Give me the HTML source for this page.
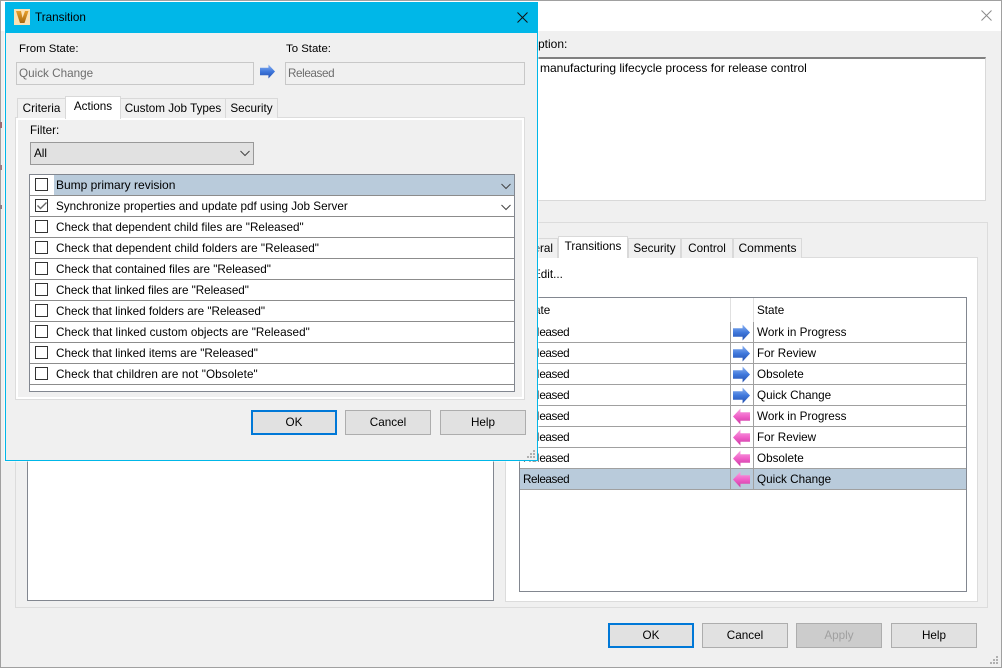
<!DOCTYPE html>
<html><head><meta charset="utf-8"><style>
html,body{margin:0;padding:0;width:1002px;height:668px;overflow:hidden;background:#f0f0f0}
*{box-sizing:border-box}
body{font:11.7px/16px "Liberation Sans",sans-serif;color:#000;position:relative}
.a{position:absolute}
.t{position:absolute;white-space:nowrap;line-height:16px;margin-top:1px}
.rel{letter-spacing:-.4px}
.btn{position:absolute;width:86px;height:25px;background:#e1e1e1;border:1px solid #adadad;text-align:center;line-height:23px}
.btn.d{border:2px solid #0078d7;line-height:21px}
.tab{position:absolute;background:#f0f0f0;border:1px solid #d9d9d9;border-bottom:none;text-align:center;white-space:nowrap}
.tab.on{background:#fff;z-index:2}
.row{position:absolute;left:1px;width:484px;height:21px;border-bottom:1px solid #8c8c8c;background:#fff}
.row span{position:absolute;left:26px;top:3px;white-space:nowrap}
.cb{position:absolute;left:5px;top:3px;width:13px;height:13px;border:1px solid #333;background:#fff}
.mrow{position:absolute;left:1px;width:446px;height:21px;border-bottom:1px solid #a0a0a0;background:#fff}
.mrow .l{position:absolute;left:3px;top:3px;white-space:nowrap;letter-spacing:-.4px}
.mrow .r{position:absolute;left:237px;top:3px;white-space:nowrap}
.mrow .sep{position:absolute;left:210px;top:0;width:1px;height:21px;background:#a0a0a0}
.mrow .sep2{position:absolute;left:233px;top:0;width:1px;height:21px;background:#a0a0a0}
.mrow svg{position:absolute;left:213px;top:2px}
</style></head><body>
<svg width="0" height="0" style="position:absolute"><defs>
<linearGradient id="b" x1="0" y1="0" x2="0" y2="1"><stop offset="0" stop-color="#8fb4f2"/><stop offset=".5" stop-color="#3f78dc"/><stop offset="1" stop-color="#2450b0"/></linearGradient>
<linearGradient id="p" x1="0" y1="0" x2="0" y2="1"><stop offset="0" stop-color="#f9a6e2"/><stop offset=".5" stop-color="#f060c8"/><stop offset="1" stop-color="#c93aa2"/></linearGradient>
<linearGradient id="v" x1="0" y1="0" x2="0" y2="1"><stop offset="0" stop-color="#e8a02c"/><stop offset="1" stop-color="#a8690f"/></linearGradient>
<symbol id="ar" viewBox="0 0 16 16"><path d="M0 4H9V0.500L16 8L9 15.500V12H0Z" fill="url(#b)"/></symbol>
<symbol id="al" viewBox="0 0 16 16"><path d="M16 4H7V0.500L0 8L7 15.500V12H16Z" fill="url(#p)"/></symbol>
</defs></svg>

<!-- main window -->
<div class="a" style="left:0;top:0;width:1002px;height:668px;border:1px solid #a0a0a0;background:#f0f0f0"></div>
<div class="a" style="left:1px;top:1px;width:1000px;height:30px;background:#fff"></div>
<svg class="a" style="left:981px;top:10px" width="11" height="11"><path d="M0.500 0.500L10.500 10.500M10.500 0.500L0.500 10.500" stroke="#8a8a8a" stroke-width="1"/></svg>
<div class="t" style="left:538px;top:35px;font-size:12px">ption:</div>
<div class="a" style="left:500px;top:57px;width:486px;height:144px;background:#fff;border-top:2px solid #808080;border-right:1px solid #d9d9d9;border-bottom:1px solid #d9d9d9"></div>
<div class="t" style="left:540px;top:59px;font-size:12px">manufacturing lifecycle process for release control</div>

<div class="a" style="left:15px;top:222px;width:973px;height:386px;border:1px solid #dcdcdc"></div>
<div class="a" style="left:27px;top:300px;width:467px;height:301px;background:#fff;border:1px solid #828790"></div>
<div class="a" style="left:505px;top:257px;width:473px;height:345px;background:#fff;border:1px solid #dcdcdc"></div>

<div class="tab" style="left:500px;top:238px;width:58px;height:20px;line-height:19px;text-align:right;padding-right:4px">eral</div>
<div class="tab on" style="left:558px;top:236px;width:70px;height:22px;line-height:19px;border-color:#d9d9d9">Transitions</div>
<div class="tab" style="left:628px;top:238px;width:53px;height:20px;line-height:19px">Security</div>
<div class="tab" style="left:681px;top:238px;width:52px;height:20px;line-height:19px">Control</div>
<div class="tab" style="left:733px;top:238px;width:69px;height:20px;line-height:19px;font-size:12px">Comments</div>

<div class="t" style="left:533px;top:266px">Edit...</div>

<div class="a" style="left:519px;top:297px;width:448px;height:295px;background:#fff;border:1px solid #828790">
 <div class="t" style="left:14px;top:4px">ate</div>
 <div class="t" style="left:237px;top:4px">State</div>
 <div class="a" style="left:210px;top:0;width:1px;height:24px;background:#e0e0e0"></div>
 <div class="a" style="left:233px;top:0;width:1px;height:24px;background:#e0e0e0"></div>
 <div class="mrow" style="left:0;top:24px"><span class="l">Released</span><i class="sep"></i><i class="sep2"></i><svg width="17" height="17"><use href="#ar"/></svg><span class="r">Work in Progress</span></div>
 <div class="mrow" style="left:0;top:45px"><span class="l">Released</span><i class="sep"></i><i class="sep2"></i><svg width="17" height="17"><use href="#ar"/></svg><span class="r">For Review</span></div>
 <div class="mrow" style="left:0;top:66px"><span class="l">Released</span><i class="sep"></i><i class="sep2"></i><svg width="17" height="17"><use href="#ar"/></svg><span class="r">Obsolete</span></div>
 <div class="mrow" style="left:0;top:87px"><span class="l">Released</span><i class="sep"></i><i class="sep2"></i><svg width="17" height="17"><use href="#ar"/></svg><span class="r">Quick Change</span></div>
 <div class="mrow" style="left:0;top:108px"><span class="l">Released</span><i class="sep"></i><i class="sep2"></i><svg width="17" height="17"><use href="#al"/></svg><span class="r">Work in Progress</span></div>
 <div class="mrow" style="left:0;top:129px"><span class="l">Released</span><i class="sep"></i><i class="sep2"></i><svg width="17" height="17"><use href="#al"/></svg><span class="r">For Review</span></div>
 <div class="mrow" style="left:0;top:150px"><span class="l">Released</span><i class="sep"></i><i class="sep2"></i><svg width="17" height="17"><use href="#al"/></svg><span class="r">Obsolete</span></div>
 <div class="mrow" style="left:0;top:171px;background:#b9cbdb"><span class="l">Released</span><i class="sep"></i><i class="sep2"></i><svg width="17" height="17"><use href="#al"/></svg><span class="r">Quick Change</span></div>
</div>

<div class="btn d" style="left:608px;top:623px">OK</div>
<div class="btn" style="left:702px;top:623px">Cancel</div>
<div class="btn" style="left:796px;top:623px;background:#ccc;color:#a0a0a0">Apply</div>
<div class="btn" style="left:891px;top:623px">Help</div>

<!-- left-edge remnants -->
<div class="a" style="left:0;top:122px;width:2px;height:6px;background:#9a6a70"></div>
<div class="a" style="left:0;top:165px;width:2px;height:5px;background:#9a7a80"></div>
<div class="a" style="left:0;top:205px;width:2px;height:4px;background:#8a7a80"></div>

<!-- dialog -->
<div class="a" style="left:5px;top:2px;width:533px;height:459px;background:#f0f0f0;border:1px solid #00b7e8;box-shadow:0 0 0 1px rgba(255,255,255,.5)">
 <div class="a" style="left:0;top:0;width:531px;height:30px;background:#00b7e8"></div>
</div>
<svg class="a" style="left:14px;top:9px" width="16" height="16"><rect width="16" height="16" fill="#fce2b4"/><path d="M2 2H7L8.500 9L11 2H14.500L10.500 14H6Z" fill="url(#v)"/></svg>
<div class="t" style="left:35px;top:9px">Transition</div>
<svg class="a" style="left:517px;top:12px" width="11" height="11"><path d="M0.500 0.500L10.500 10.500M10.500 0.500L0.500 10.500" stroke="#111" stroke-width="1"/></svg>

<div class="t" style="left:19px;top:40px;font-size:11.4px">From State:</div>
<div class="t" style="left:286px;top:40px;font-size:11.4px">To State:</div>
<div class="a" style="left:16px;top:62px;width:238px;height:23px;background:#f0f0f0;border:1px solid #c8c8c8"></div>
<div class="t" style="left:19px;top:65px;color:#6d6d6d">Quick Change</div>
<svg class="a" style="left:260px;top:64px" width="15" height="15"><use href="#ar"/></svg>
<div class="a" style="left:285px;top:62px;width:240px;height:23px;background:#f0f0f0;border:1px solid #c8c8c8"></div>
<div class="t rel" style="left:288px;top:65px;color:#6d6d6d">Released</div>

<div class="a" style="left:15px;top:117px;width:510px;height:283px;border:1px solid #dcdcdc;box-shadow:inset 0 0 0 2px #fff"></div>
<div class="tab" style="left:17px;top:98px;width:49px;height:20px;line-height:19px">Criteria</div>
<div class="tab on" style="left:65px;top:96px;width:56px;height:23px;line-height:19px;border-color:#d9d9d9">Actions</div>
<div class="tab" style="left:120px;top:98px;width:106px;height:20px;line-height:19px">Custom Job Types</div>
<div class="tab" style="left:225px;top:98px;width:53px;height:20px;line-height:19px">Security</div>

<div class="t" style="left:30px;top:122px">Filter:</div>
<div class="a" style="left:30px;top:142px;width:224px;height:23px;background:#e1e1e1;border:1px solid #999"></div>
<div class="t" style="left:34px;top:145px">All</div>
<svg class="a" style="left:240px;top:150px" width="10" height="7"><path d="M0.500 1L5 5.500L9.500 1" fill="none" stroke="#444" stroke-width="1"/></svg>

<div class="a" style="left:29px;top:174px;width:486px;height:218px;background:#fff;border:1px solid #828790;overflow:hidden">
 <div class="row" style="left:0;top:0;width:484px"><div class="a" style="left:24px;top:0;width:460px;height:20px;background:#b9cbdb"></div><i class="cb"></i><span style="font-size:12px;top:2px">Bump primary revision</span><svg class="a" style="left:471px;top:8px" width="10" height="7"><path d="M0.500 1L5 5.500L9.500 1" fill="none" stroke="#444"/></svg></div>
 <div class="row" style="left:0;top:21px"><i class="cb"></i><svg class="a" style="left:7px;top:6px" width="10" height="8"><path d="M0.500 3.500L3.500 6.500L9.500 0.500" fill="none" stroke="#666" stroke-width="1.400"/></svg><span>Synchronize properties and update pdf using Job Server</span><svg class="a" style="left:471px;top:8px" width="10" height="7"><path d="M0.500 1L5 5.500L9.500 1" fill="none" stroke="#444"/></svg></div>
 <div class="row" style="left:0;top:42px"><i class="cb"></i><span style="letter-spacing:.02px">Check that dependent child files are "Released"</span></div>
 <div class="row" style="left:0;top:63px"><i class="cb"></i><span style="letter-spacing:.04px">Check that dependent child folders are "Released"</span></div>
 <div class="row" style="left:0;top:84px"><i class="cb"></i><span>Check that contained files are "Released"</span></div>
 <div class="row" style="left:0;top:105px"><i class="cb"></i><span style="letter-spacing:-.05px">Check that linked files are "Released"</span></div>
 <div class="row" style="left:0;top:126px"><i class="cb"></i><span>Check that linked folders are "Released"</span></div>
 <div class="row" style="left:0;top:147px"><i class="cb"></i><span style="letter-spacing:.04px">Check that linked custom objects are "Released"</span></div>
 <div class="row" style="left:0;top:168px"><i class="cb"></i><span>Check that linked items are "Released"</span></div>
 <div class="row" style="left:0;top:189px"><i class="cb"></i><span style="letter-spacing:.1px">Check that children are not "Obsolete"</span></div>
</div>

<div class="btn d" style="left:251px;top:410px">OK</div>
<div class="btn" style="left:345px;top:410px">Cancel</div>
<div class="btn" style="left:440px;top:410px">Help</div>
<svg class="a" style="left:526px;top:449px" width="10" height="10"><g fill="#b0b0b0"><rect x="7" y="1" width="2" height="2"/><rect x="4" y="4" width="2" height="2"/><rect x="7" y="4" width="2" height="2"/><rect x="1" y="7" width="2" height="2"/><rect x="4" y="7" width="2" height="2"/><rect x="7" y="7" width="2" height="2"/></g></svg>
<svg class="a" style="left:989px;top:655px" width="10" height="10"><g fill="#b0b0b0"><rect x="7" y="1" width="2" height="2"/><rect x="4" y="4" width="2" height="2"/><rect x="7" y="4" width="2" height="2"/><rect x="1" y="7" width="2" height="2"/><rect x="4" y="7" width="2" height="2"/><rect x="7" y="7" width="2" height="2"/></g></svg>
</body></html>
